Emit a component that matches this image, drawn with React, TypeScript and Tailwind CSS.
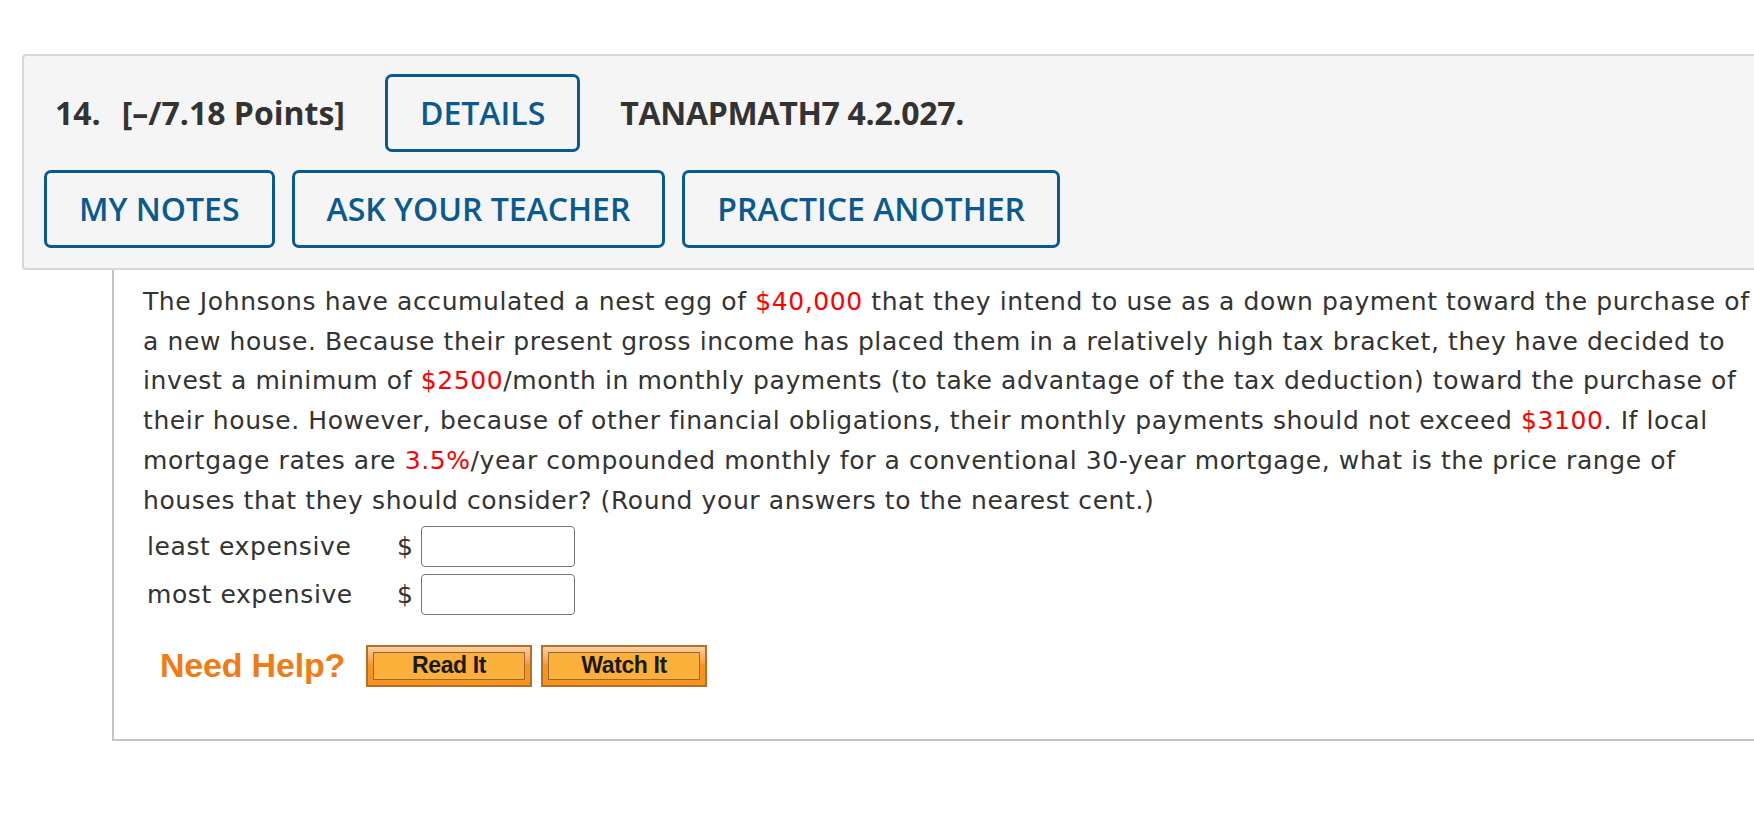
import React from 'react';

function OutlineButton({ label }: { label: string }) {
  return (
    <button className="h-[78px] px-[32px] border-[3px] border-[#0b5a8f] rounded-[7px] bg-[#f5f5f5] text-[#0b5a8f] text-[32px] font-semibold leading-none flex items-center justify-center whitespace-nowrap">
      {label}
    </button>
  );
}

function HelpButton({ label }: { label: string }) {
  return (
    <div className="w-[166px] h-[42px] border-2 border-[#b46f2c] bg-gradient-to-b from-[#f8cfa0] via-[#f7941d] to-[#f7941d] p-[5px]">
      <div className="h-full border border-[#94693b] bg-[#fbb03b] flex items-center justify-center text-[23px] font-bold text-[#1a1a1a] font-['Liberation_Sans',Arial,sans-serif] tracking-[-0.4px]">
        {label}
      </div>
    </div>
  );
}

const Red = ({ children }: { children: React.ReactNode }) => (
  <span className="text-[#ff0000]">{children}</span>
);

export default function App() {
  return (
    <div className="min-h-screen bg-white pt-[54px] font-['Open_Sans',sans-serif] text-[#333]">
      {/* question header */}
      <div className="ml-[22px] h-[216px] border-2 border-r-0 border-[#d8d8d8] rounded-l-[4px] bg-[#f5f5f5] pl-[20px] pt-[18px] flex flex-col gap-[18px]">
        <div className="flex items-center h-[78px]">
          <span className="ml-[11px] text-[32px] font-bold">14.</span>
          <span className="ml-[21px] text-[32px] font-bold">[–/7.18 Points]</span>
          <div className="ml-[40px]">
            <OutlineButton label="DETAILS" />
          </div>
          <span className="ml-[40px] text-[32px] font-bold tracking-[-0.3px]">TANAPMATH7 4.2.027.</span>
        </div>
        <div className="flex items-center gap-[17px]">
          <OutlineButton label="MY NOTES" />
          <OutlineButton label="ASK YOUR TEACHER" />
          <OutlineButton label="PRACTICE ANOTHER" />
        </div>
      </div>

      {/* question body */}
      <div className="ml-[112px] border-l-2 border-b-2 border-[#c4c4c4] pl-[29px] pt-[12px] pb-[48px] font-['DejaVu_Sans',Verdana,sans-serif] text-[25px] tracking-[0.6px] text-[#333]">
        <p className="leading-[39.7px] whitespace-nowrap">
          The Johnsons have accumulated a nest egg of <Red>$40,000</Red> that they intend to use as a down payment toward the purchase of
          <br />
          a new house. Because their present gross income has placed them in a relatively high tax bracket, they have decided to
          <br />
          invest a minimum of <Red>$2500</Red>/month in monthly payments (to take advantage of the tax deduction) toward the purchase of
          <br />
          their house. However, because of other financial obligations, their monthly payments should not exceed <Red>$3100</Red>. If local
          <br />
          mortgage rates are <Red>3.5%</Red>/year compounded monthly for a conventional 30-year mortgage, what is the price range of
          <br />
          houses that they should consider? (Round your answers to the nearest cent.)
        </p>

        <div className="mt-[6px] ml-[4px] flex flex-col gap-[7px]">
          {['least expensive', 'most expensive'].map((label) => (
            <div key={label} className="flex items-center h-[41px]">
              <span className="w-[250px]">{label}</span>
              <span className="w-[24px]">$</span>
              <input
                type="text"
                className="w-[154px] h-[41px] border border-[#777] rounded-[4px] bg-white"
              />
            </div>
          ))}
        </div>

        <div className="mt-[25px] ml-[17px] flex items-center tracking-normal">
          <span className="text-[34px] font-bold text-[#f07c14] font-['Liberation_Sans',Arial,sans-serif] tracking-[-0.2px]">
            Need Help?
          </span>
          <div className="ml-[21px] flex gap-[9px]">
            <HelpButton label="Read It" />
            <HelpButton label="Watch It" />
          </div>
        </div>
      </div>
    </div>
  );
}
